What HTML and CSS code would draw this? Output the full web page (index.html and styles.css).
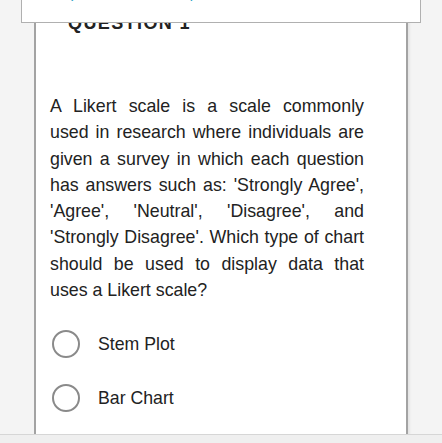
FILE: index.html
```html
<!DOCTYPE html>
<html lang="en">
<head>
<meta charset="utf-8">
<title>Question 1</title>
<link rel="stylesheet" href="styles.css">
</head>
<body>
<div class="topbox">
  <div class="toptext"><span class="paren">(</span><span class="bar">|</span></div>
</div>
<main class="page">
  <section class="card">
    <h2 class="heading">QUESTION 1</h2>
    <p class="question">A Likert scale is a scale commonly used in research where individuals are given a survey in which each question has answers such as: 'Strongly Agree', 'Agree', 'Neutral', 'Disagree', and 'Strongly Disagree'. Which type of chart should be used to display data that uses a Likert scale?</p>
    <div class="options">
      <label class="option"><span class="radio"></span><span class="label">Stem Plot</span></label>
      <label class="option"><span class="radio"></span><span class="label">Bar Chart</span></label>
    </div>
  </section>
</main>
<div class="bottombar"></div>
</body>
</html>
```
FILE: styles.css
```css
html, body {
  margin: 0;
  padding: 0;
  height: 443px;
  overflow: hidden;
}
body {
  background: #f4f4f4;
  font-family: "Liberation Sans", Arial, sans-serif;
  color: #222;
}
.topbox {
  position: fixed;
  top: 0;
  left: 21px;
  width: 398px;
  height: 22px;
  background: #fff;
  border: 1px solid #b0b0b0;
  border-top: none;
  overflow: hidden;
  z-index: 2;
}
.toptext {
  display: flex;
  margin-top: -16px;
  padding-left: 46px;
  font-size: 16px;
  line-height: 18px;
  color: #2a9fc4;
}
.bar {
  margin-left: 116px;
}
.page {
  padding: 0 34px;
  height: 443px;
}
.card {
  height: 100%;
  background: #fff;
  border-left: 2px solid #a3a3a3;
  border-right: 2px solid #a3a3a3;
  box-shadow: 2px 0 2px rgba(0,0,0,0.06);
  padding: 12px 0 0 14px;
  box-sizing: border-box;
}
.heading {
  margin: 0 0 59px 18px;
  font-size: 18px;
  line-height: 22px;
  font-weight: bold;
  letter-spacing: 1.4px;
  color: #222;
}
.question {
  margin: 0;
  width: 314px;
  font-size: 17.8px;
  line-height: 26.3px;
  text-align: justify;
}
.options {
  display: flex;
  flex-direction: column;
  gap: 26px;
  margin-top: 27px;
  padding-left: 2px;
}
.option {
  display: flex;
  align-items: center;
  gap: 18px;
  height: 28px;
}
.radio {
  width: 24px;
  height: 24px;
  border: 2px solid #8a8a8a;
  border-radius: 50%;
  flex: none;
}
.label {
  font-size: 17.7px;
  color: #222;
}
.bottombar {
  position: fixed;
  left: 0;
  right: 0;
  bottom: 0;
  height: 8px;
  background: #efefef;
  border-top: 1px solid #d6d6d6;
  z-index: 2;
}
```
